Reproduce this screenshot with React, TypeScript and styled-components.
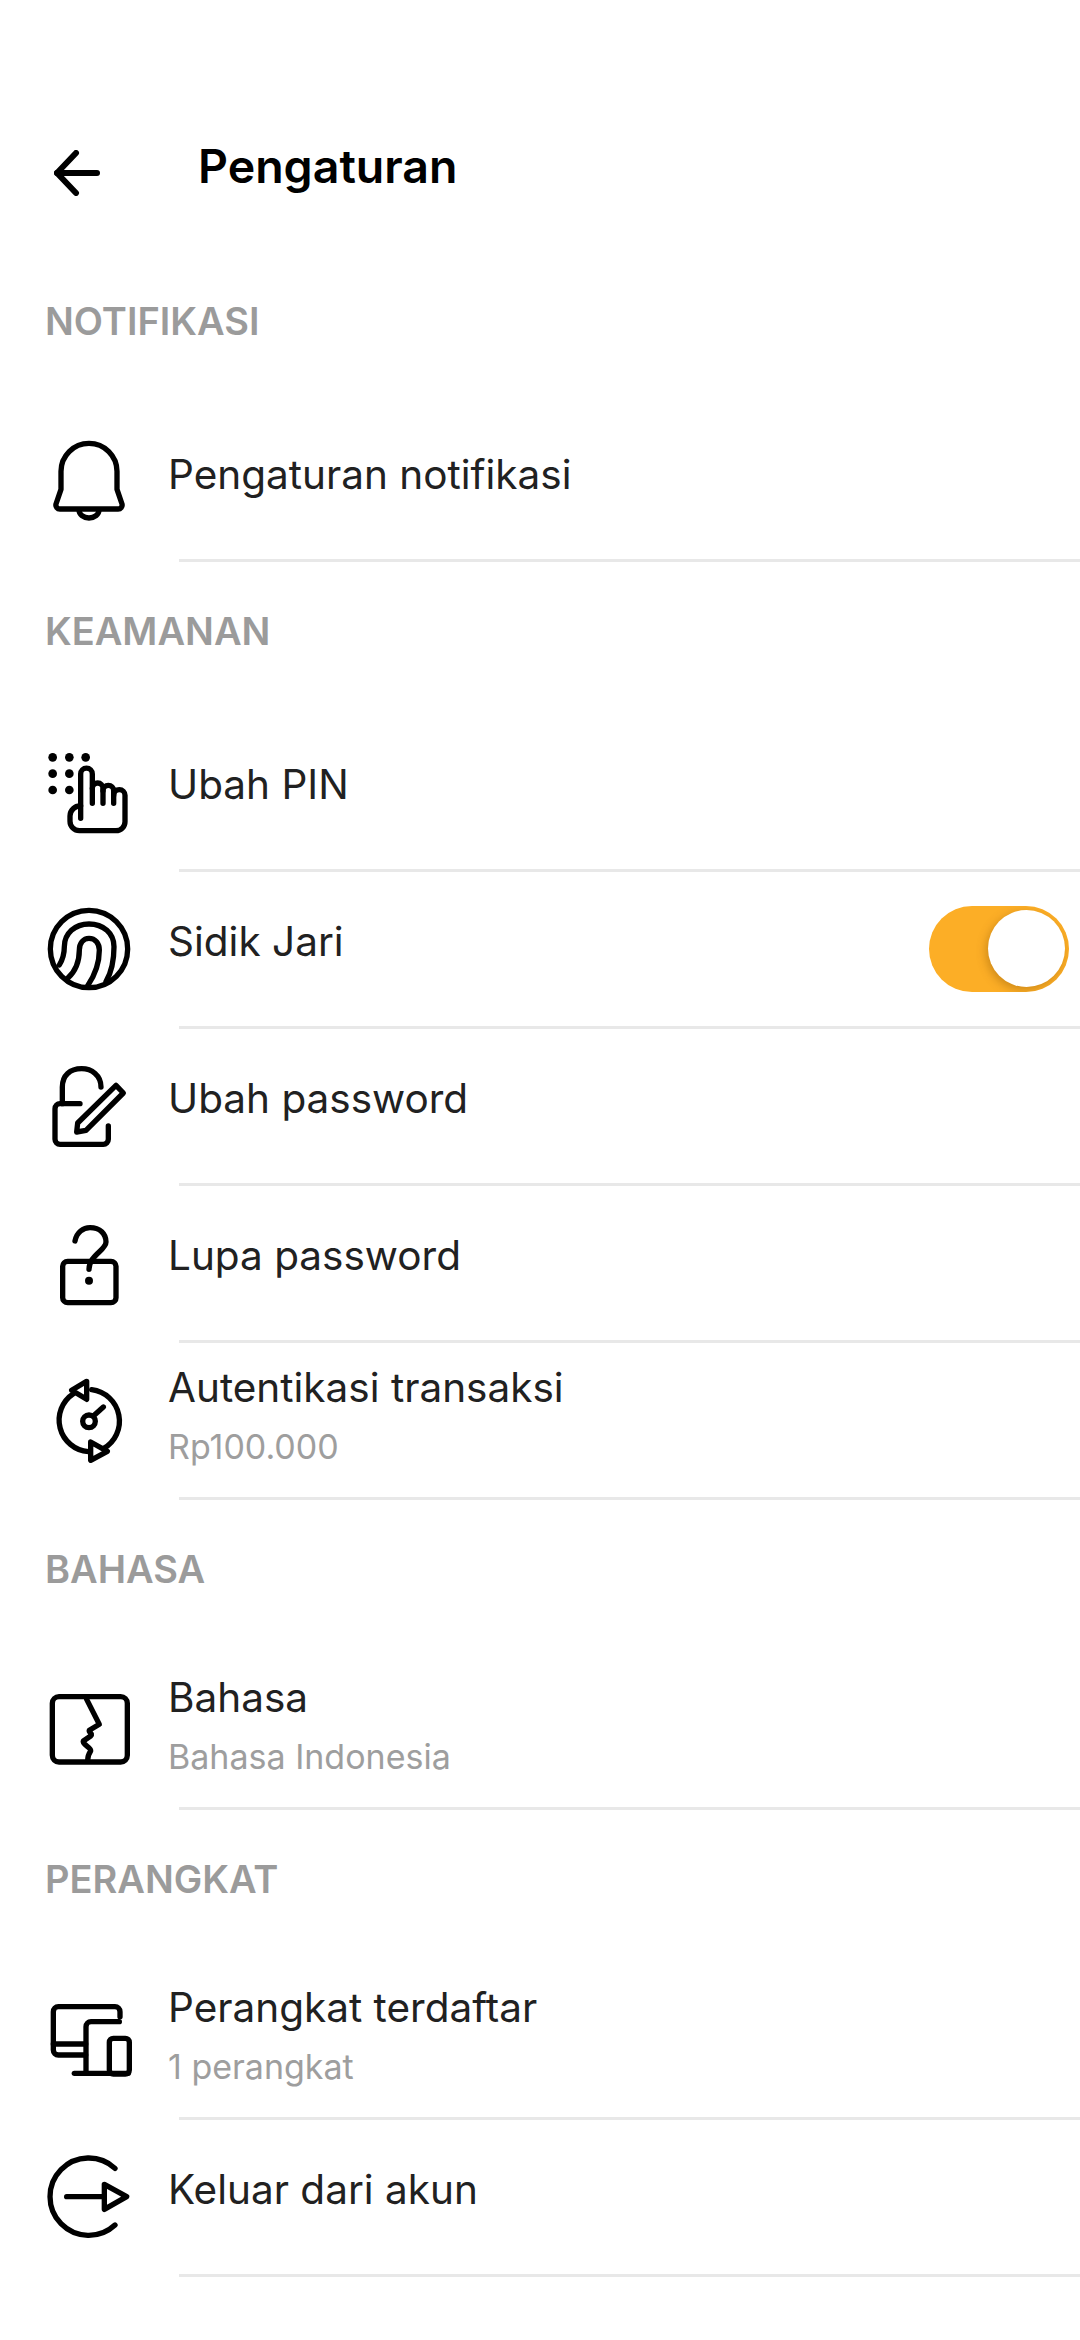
import React from 'react';
import styled, { createGlobalStyle } from 'styled-components';

const GlobalStyle = createGlobalStyle`
  html, body {
    margin: 0;
    padding: 0;
    background: #ffffff;
  }

  body {
    font-family: Inter, "Noto Sans", sans-serif;
    font-feature-settings: "liga" 1;
  }
`;

interface IconProps {
  box: string;
  children: React.ReactNode;
}

function Icon({ box, children }: IconProps) {
  return (
    <IconSvg viewBox={box} fill="none" stroke="#000" strokeWidth={16} strokeLinecap="round" strokeLinejoin="round">
      {children}
    </IconSvg>
  );
}

const BellIcon = () => (
  <Icon box="0 0 300 300">
    <path d="M66 172V118a84 84 0 0 1 168 0V172L249 216a12 12 0 0 1 -12 15H63a12 12 0 0 1 -12 -15Z" />
    <path d="M120 234a30 24 0 0 0 60 0" />
  </Icon>
);

const HandIcon = () => (
  <Icon box="57 66 300 300">
    <circle cx="98" cy="112" r="13" fill="#000" stroke="none" />
    <circle cx="148" cy="112" r="13" fill="#000" stroke="none" />
    <circle cx="197" cy="112" r="13" fill="#000" stroke="none" />
    <circle cx="98" cy="161" r="13" fill="#000" stroke="none" />
    <circle cx="148" cy="161" r="13" fill="#000" stroke="none" />
    <circle cx="98" cy="210" r="13" fill="#000" stroke="none" />
    <circle cx="148" cy="210" r="13" fill="#000" stroke="none" />
    <path d="M182 295V162a17 17 0 0 1 35 0V250" />
    <path d="M217 205a16 16 0 0 1 32 0V250" />
    <path d="M249 212a16 16 0 0 1 32 0V250" />
    <path d="M281 226a17 17 0 0 1 34 0V305a27 27 0 0 1 -27 27H178a28 28 0 0 1 -28 -28V288a30 30 0 0 1 32 -30" />
  </Icon>
);

const FingerprintIcon = () => (
  <Icon box="57 537 300 300">
    <circle cx="207" cy="687" r="116" />
    <path d="M118 735C130 715 133 700 133 680C133 640 165 612 207 612C250 612 282 640 282 680C282 720 275 755 258 785" />
    <path d="M143 775C165 755 178 725 178 690C178 670 190 655 207 655C226 655 238 670 238 690C238 730 225 765 203 797" />
  </Icon>
);

const LockPenIcon = () => (
  <Icon box="57 42 300 300">
    <path d="M127 185V135C127 100 150 80 185 80C215 80 243 100 243 135" />
    <path d="M180 185H120a15 15 0 0 0 -15 15V292a15 15 0 0 0 15 15H250a15 15 0 0 0 15 -15V252" />
    <path d="M288 130L310 153L198 265L170 270L173 243Z" />
  </Icon>
);

const LockQuestionIcon = () => (
  <Icon box="57 513 300 300">
    <rect x="128" y="658" width="160" height="124" rx="15" />
    <path d="M165 597C170 570 190 557 210 557C240 557 258 575 258 600C258 625 207 640 207 682" />
    <circle cx="207" cy="716" r="12" fill="#000" stroke="none" />
  </Icon>
);

const AuthIcon = () => (
  <Icon box="57 84 300 300">
    <path d="M215 143A95 95 0 0 1 250 320" />
    <path d="M205 329A95 95 0 0 1 160 155" />
    <path d="M200 118L155 145L200 172Z" />
    <path d="M212 300L262 328L212 355Z" />
    <circle cx="207" cy="238" r="19" />
    <path d="M220 222L250 195" />
  </Icon>
);

const FaceIcon = () => (
  <Icon box="57 57 300 300">
    <rect x="97" y="107" width="225" height="196" rx="20" />
    <path d="M200 115L238 190L208 208C205 215 220 218 212 225L190 240C185 250 215 260 212 270C205 280 203 285 203 298" />
  </Icon>
);

const DevicesIcon = () => (
  <Icon box="57 60 300 300">
    <path d="M300 140V125a15 15 0 0 0 -15 -15H115a15 15 0 0 0 -15 15V240a15 15 0 0 0 15 15H197" />
    <path d="M100 222H197" />
    <path d="M198 310V170a15 15 0 0 1 15 -15H298" />
    <rect x="268" y="205" width="60" height="107" rx="12" />
    <path d="M163 310H325" />
  </Icon>
);

const LogoutIcon = () => (
  <Icon box="57 531 300 300">
    <path d="M285 595A116 116 0 1 0 285 765" />
    <path d="M140 680H250" />
    <path d="M253 643L320 680L253 718Z" />
  </Icon>
);

function Toggle() {
  return (
    <ToggleTrack>
      <ToggleKnob />
    </ToggleTrack>
  );
}

interface RowData {
  icon: React.ReactNode;
  label: string;
  sub?: string;
  toggle?: boolean;
}

interface SectionData {
  title: string;
  rows: RowData[];
}

const sections: SectionData[] = [
  {
    title: 'NOTIFIKASI',
    rows: [{ icon: <BellIcon />, label: 'Pengaturan notifikasi' }],
  },
  {
    title: 'KEAMANAN',
    rows: [
      { icon: <HandIcon />, label: 'Ubah PIN' },
      { icon: <FingerprintIcon />, label: 'Sidik Jari', toggle: true },
      { icon: <LockPenIcon />, label: 'Ubah password' },
      { icon: <LockQuestionIcon />, label: 'Lupa password' },
      { icon: <AuthIcon />, label: 'Autentikasi transaksi', sub: 'Rp100.000' },
    ],
  },
  {
    title: 'BAHASA',
    rows: [{ icon: <FaceIcon />, label: 'Bahasa', sub: 'Bahasa Indonesia' }],
  },
  {
    title: 'PERANGKAT',
    rows: [
      { icon: <DevicesIcon />, label: 'Perangkat terdaftar', sub: '1 perangkat' },
      { icon: <LogoutIcon />, label: 'Keluar dari akun' },
    ],
  },
];

function SettingsRow({ icon, label, sub, toggle }: RowData) {
  return (
    <li>
      <Row>
        {icon}
        <RowText>
          <RowLabel>{label}</RowLabel>
          {sub && <RowSub>{sub}</RowSub>}
        </RowText>
        {toggle && <Toggle />}
      </Row>
      <Divider />
    </li>
  );
}

export default function App() {
  return (
    <Page>
      <GlobalStyle />
      <Header>
        <BackIcon viewBox="0 0 46 46" fill="none" stroke="#000" strokeWidth={6} strokeLinecap="round" strokeLinejoin="round">
          <path d="M22 3L3 23L22 43" />
          <path d="M3 23H43" />
        </BackIcon>
        <Title>Pengaturan</Title>
      </Header>
      {sections.map((section) => (
        <section key={section.title}>
          <SectionTitle>{section.title}</SectionTitle>
          <RowList>
            {section.rows.map((row) => (
              <SettingsRow key={row.label} {...row} />
            ))}
          </RowList>
        </section>
      ))}
    </Page>
  );
}

const Page = styled.div`
  width: 1080px;
  min-height: 2340px;
  background: #ffffff;
`;

const Header = styled.header`
  display: flex;
  align-items: flex-start;
  height: 252px;
  box-sizing: border-box;
  padding: 137px 0 0 54px;
`;

const BackIcon = styled.svg`
  width: 46px;
  height: 46px;
  margin-top: 13px;
  flex: none;
`;

const Title = styled.h1`
  margin: 0 0 0 98px;
  font-size: 46.5px;
  line-height: 58px;
  font-weight: 600;
  color: #000000;
`;

const SectionTitle = styled.h2`
  margin: 0;
  height: 153px;
  box-sizing: border-box;
  padding: 45px 0 0 45px;
  font-size: 38px;
  line-height: 48px;
  font-weight: 600;
  color: #9b9b9b;
`;

const RowList = styled.ul`
  margin: 0;
  padding: 0;
  list-style: none;
`;

const Row = styled.div`
  display: flex;
  align-items: center;
  height: 154px;
  padding: 0 11px 0 39px;
`;

const IconSvg = styled.svg`
  width: 100px;
  height: 100px;
  flex: none;
`;

const RowText = styled.div`
  flex: 1;
  margin-left: 29px;
  padding-bottom: 14px;
`;

const RowLabel = styled.div`
  font-size: 40.5px;
  line-height: 56px;
  font-weight: 400;
  color: #212121;
`;

const RowSub = styled.div`
  margin: 6px 0 -6px;
  font-size: 34px;
  line-height: 50px;
  font-weight: 400;
  color: #9e9e9e;
`;

const Divider = styled.div`
  height: 3px;
  margin-left: 179px;
  background: #e8e8e8;
`;

const ToggleTrack = styled.div`
  display: flex;
  justify-content: flex-end;
  width: 140px;
  height: 86px;
  box-sizing: border-box;
  padding: 4px;
  border-radius: 43px;
  background: #fcae26;
  overflow: hidden;
  flex: none;
`;

const ToggleKnob = styled.div`
  width: 77px;
  height: 77px;
  border-radius: 50%;
  background: #ffffff;
  box-shadow: -2px 3px 10px rgba(120, 70, 0, 0.35);
`;
